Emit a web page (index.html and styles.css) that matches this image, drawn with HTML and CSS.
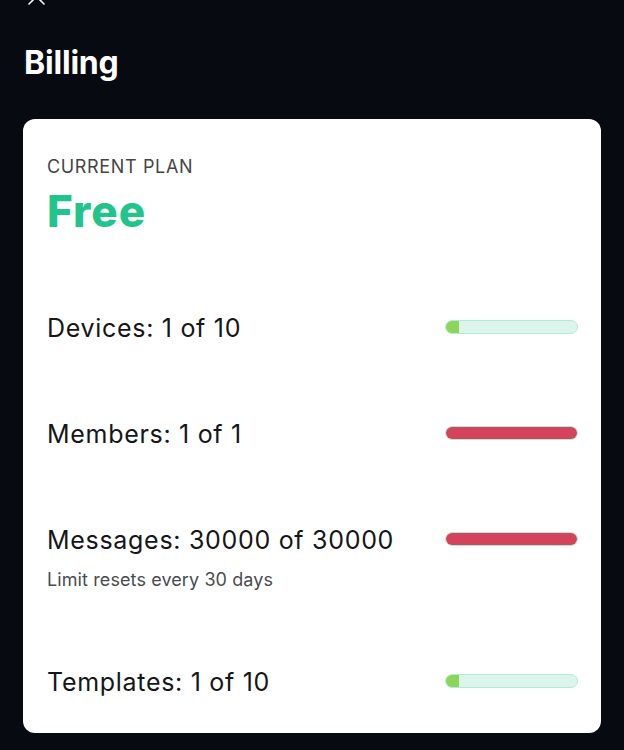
FILE: index.html
```html
<!DOCTYPE html>
<html lang="en">
<head>
<meta charset="utf-8">
<title>Billing</title>
<link rel="stylesheet" href="styles.css">
</head>
<body>
<div class="page">
  <svg class="close" viewBox="0 0 17 17" width="17" height="17" aria-label="Close">
    <path d="M1 1 L16 16 M16 1 L1 16" stroke="#ffffff" stroke-width="1.6" stroke-linecap="round" fill="none"/>
  </svg>
  <h1 class="title">Billing</h1>
  <section class="card">
    <div class="plan-label">Current plan</div>
    <div class="plan-name">Free</div>
    <div class="usage">
      <div class="row">
        <div class="row-text">
          <div class="row-label">Devices: 1 of 10</div>
        </div>
        <div class="bar"><div class="fill ok" style="width:10%"></div></div>
      </div>
      <div class="row">
        <div class="row-text">
          <div class="row-label">Members: 1 of 1</div>
        </div>
        <div class="bar"><div class="fill full" style="width:100%"></div></div>
      </div>
      <div class="row">
        <div class="row-text">
          <div class="row-label">Messages: 30000 of 30000</div>
          <div class="row-note">Limit resets every 30 days</div>
        </div>
        <div class="bar"><div class="fill full" style="width:100%"></div></div>
      </div>
      <div class="row">
        <div class="row-text">
          <div class="row-label">Templates: 1 of 10</div>
        </div>
        <div class="bar"><div class="fill ok" style="width:10%"></div></div>
      </div>
    </div>
  </section>
</div>
</body>
</html>
```
FILE: styles.css
```css
html, body {
  margin: 0;
  padding: 0;
  background: #080a12;
}
body {
  font-family: Inter, "Noto Sans", "Liberation Sans", sans-serif;
  height: 750px;
  overflow: hidden;
}
.page {
  display: flex;
  flex-direction: column;
  padding: 0 23px;
}
.close {
  display: block;
  margin: -12px 0 0 5px;
  flex: none;
}
.title {
  margin: 38px 0 0 1px;
  font-size: 32px;
  line-height: 40px;
  font-weight: 700;
  color: #ffffff;
  letter-spacing: -0.2px;
}
.card {
  margin-top: 36px;
  background: #ffffff;
  border-radius: 12px;
  padding: 37px 23px 36px 24px;
}
.plan-label {
  font-size: 18px;
  line-height: 22px;
  text-transform: uppercase;
  color: #444548;
  letter-spacing: 0.65px;
}
.plan-name {
  margin-top: 7px;
  font-size: 44px;
  line-height: 52px;
  font-weight: 800;
  color: #21c48b;
  letter-spacing: 1px;
}
.usage {
  margin-top: 76px;
  display: flex;
  flex-direction: column;
  gap: 76px;
}
.row {
  display: flex;
  justify-content: space-between;
  align-items: flex-start;
}
.row-label {
  font-size: 25px;
  line-height: 30px;
  color: #151619;
  letter-spacing: 0.7px;
}
.row-note {
  margin-top: 14px;
  font-size: 18px;
  line-height: 22px;
  color: #4a4b4f;
  letter-spacing: 0.1px;
}
.bar {
  margin-top: 7px;
  width: 133px;
  height: 14px;
  box-sizing: border-box;
  border: 1.5px solid #aeecd8;
  border-radius: 7px;
  background: #dcf5ec;
  overflow: hidden;
}
.fill {
  height: 100%;
}
.fill.ok {
  background: #8bd55b;
}
.fill.full {
  background: #d4435b;
}
```
